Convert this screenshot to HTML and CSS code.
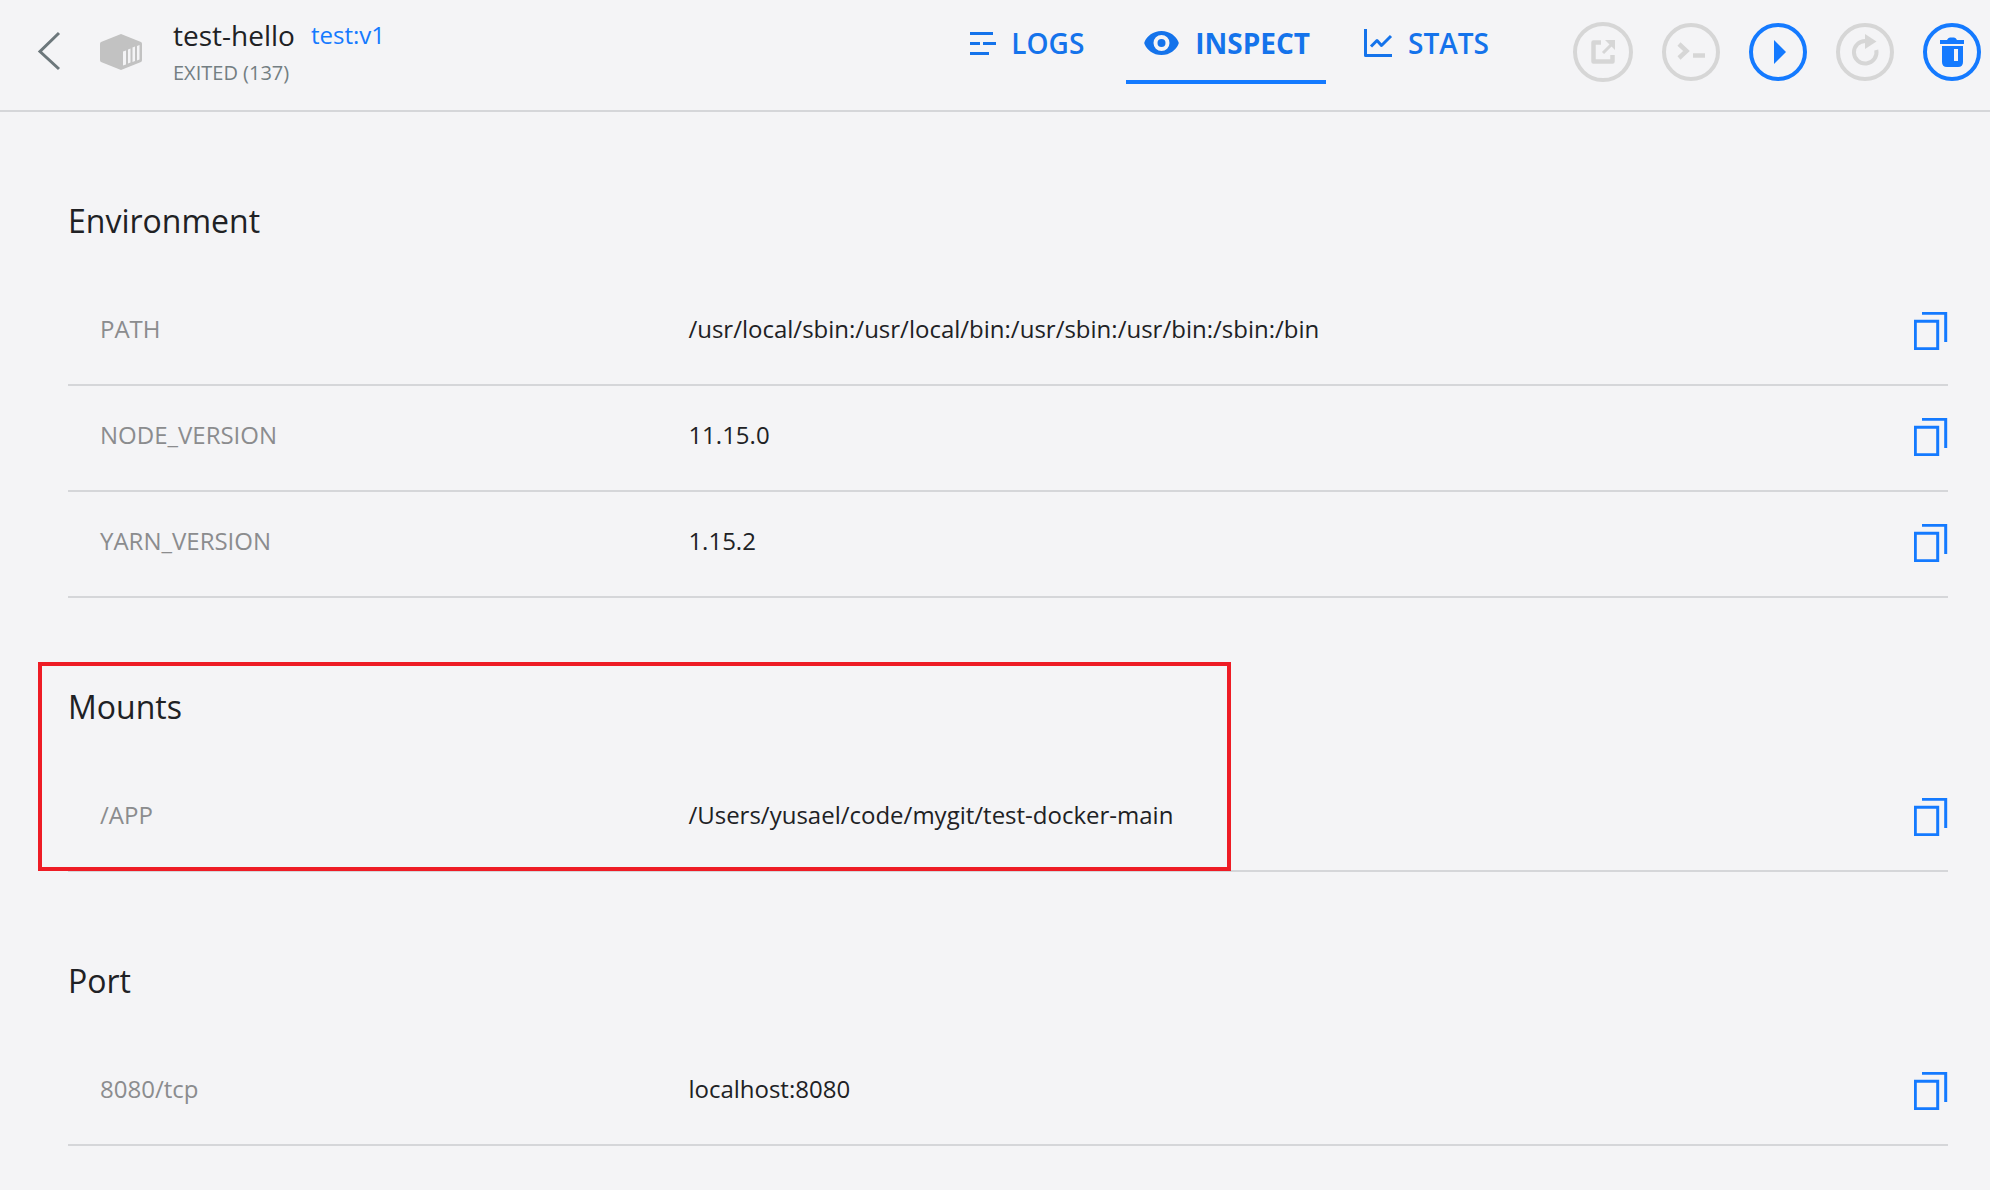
FILE: index.html
```
<!DOCTYPE html>
<html lang="en">

<head>
    <meta charset="UTF-8">
    <meta name="viewport" content="width=device-width,initial-scale=1.0">
    <title>test-hello</title>
    <link rel="stylesheet" href="styles.css">
</head>

<body>
    <!-- copy icon, shared by all rows -->
    <svg class="sprite" width="0" height="0">
        <symbol id="copy" viewBox="0 0 34 38">
            <path d="M8 1.3H31.7V30" />
            <path d="M1.3 9.3H23.7V36.7H1.3Z" />
        </symbol>
    </svg>

    <header class="header">
        <button class="back" type="button" aria-label="Back">
            <svg width="24" height="40" viewBox="0 0 24 40">
                <path d="M22 2L3 20.500L22 38" fill="none" stroke="#6c777b" stroke-width="3" />
            </svg>
        </button>
        <svg class="cube" width="42" height="36" viewBox="0 0 42 36">
            <path d="M21 0L41 8Q42 8.500 42 10V26Q42 27.500 41 28L21 36L1 28Q0 27.500 0 26V10Q0 8.500 1 8Z" fill="#c2c2c2" />
            <path d="M23 17.500L26 16.500V30.500L23 31.500ZM28 15.500L30.500 14.500V28.500L28 29.500ZM32.500 13.500L35 12.500V27L32.500 28ZM37 12L39.500 11V25.500L37 26.500Z" fill="#f4f4f6" />
        </svg>
        <div class="title">
            <div class="name">
                <h1>test-hello</h1>
                <a href="#">test:v1</a>
            </div>
            <div class="status">EXITED (137)</div>
        </div>

        <nav class="tabs">
            <a class="tab" href="#">
                <svg width="25" height="28" viewBox="0 0 25 28">
                    <path d="M0 4.500H23M0 14.500H10M13 14.500H26M0 24.500H19" fill="none" stroke="currentColor" stroke-width="3" />
                </svg>
                LOGS
            </a>
            <a class="tab active" href="#">
                <svg width="35" height="28" viewBox="0 0 35 28">
                    <path fill-rule="evenodd" d="M17.500 2C9 2 3 7 0.500 13Q0 14 0.500 15C3 21 9 26 17.500 26S32 21 34.500 15Q35 14 34.500 13C32 7 26 2 17.500 2ZM17.500 6A8 8 0 1 1 17.500 22A8 8 0 1 1 17.500 6Z" fill="currentColor" />
                    <circle cx="17.500" cy="14" r="4" fill="currentColor" />
                </svg>
                INSPECT
            </a>
            <a class="tab" href="#">
                <svg width="28" height="28" viewBox="0 0 28 28">
                    <path d="M1.500 0V26.500H28M7 17.500L13 11.500L17.500 16.500L27 7" fill="none" stroke="currentColor" stroke-width="3" stroke-linejoin="round" />
                </svg>
                STATS
            </a>
        </nav>

        <div class="actions">
            <button class="open" type="button" aria-label="Open in browser" disabled>
                <svg width="32" height="32" viewBox="0 0 32 32">
                    <path d="M14 6.500H6.500V25.500H25.500V19" fill="none" stroke="currentColor" stroke-width="4.500" stroke-linejoin="round" />
                    <path d="M16 17L25 8" stroke="currentColor" stroke-width="3" />
                    <path d="M18 4H28V14Z" fill="currentColor" />
                </svg>
            </button>
            <button type="button" aria-label="CLI" disabled>
                <svg width="32" height="32" viewBox="0 0 32 32">
                    <path d="M4 8L11.500 15L4 22M18 19.500H30" fill="none" stroke="currentColor" stroke-width="4.500" />
                </svg>
            </button>
            <button type="button" aria-label="Start">
                <svg width="32" height="32" viewBox="0 0 32 32">
                    <path d="M12 4L24 16L12 28Z" fill="currentColor" />
                </svg>
            </button>
            <button type="button" aria-label="Restart" disabled>
                <svg width="32" height="32" viewBox="0 0 32 32">
                    <path d="M17 5A11.300 11.300 0 1 0 27.300 14" fill="none" stroke="currentColor" stroke-width="4" />
                    <path d="M16 -2L27.500 5.500L16 13Z" fill="currentColor" />
                </svg>
            </button>
            <button type="button" aria-label="Delete">
                <svg width="32" height="32" viewBox="0 0 32 32">
                    <path d="M4 4H11Q12 1.500 14 1.500H18Q20 1.500 21 4H28V8H4Z" fill="currentColor" />
                    <path fill-rule="evenodd" d="M6 10H27V26Q27 31 22 31H11Q6 31 6 26ZM18 13V25H22V13Z" fill="currentColor" />
                </svg>
            </button>
        </div>
    </header>

    <main class="content">
        <section>
            <h2>Environment</h2>
            <table>
                <tr>
                    <th scope="row">PATH</th>
                    <td>/usr/local/sbin:/usr/local/bin:/usr/sbin:/usr/bin:/sbin:/bin</td>
                    <td class="action"><button class="copy" type="button" aria-label="Copy"><svg><use href="#copy" /></svg></button></td>
                </tr>
                <tr>
                    <th scope="row">NODE_VERSION</th>
                    <td>11.15.0</td>
                    <td class="action"><button class="copy" type="button" aria-label="Copy"><svg><use href="#copy" /></svg></button></td>
                </tr>
                <tr>
                    <th scope="row">YARN_VERSION</th>
                    <td>1.15.2</td>
                    <td class="action"><button class="copy" type="button" aria-label="Copy"><svg><use href="#copy" /></svg></button></td>
                </tr>
            </table>
        </section>

        <section class="marked">
            <h2>Mounts</h2>
            <table>
                <tr>
                    <th scope="row">/APP</th>
                    <td>/Users/yusael/code/mygit/test-docker-main</td>
                    <td class="action"><button class="copy" type="button" aria-label="Copy"><svg><use href="#copy" /></svg></button></td>
                </tr>
            </table>
        </section>

        <section>
            <h2>Port</h2>
            <table>
                <tr>
                    <th scope="row">8080/tcp</th>
                    <td>localhost:8080</td>
                    <td class="action"><button class="copy" type="button" aria-label="Copy"><svg><use href="#copy" /></svg></button></td>
                </tr>
            </table>
        </section>
    </main>
</body>

</html>
```
FILE: styles.css
```
* {
    margin: 0;
    padding: 0;
    box-sizing: border-box;
}

body {
    background-color: #f4f4f6;
    color: #202124;
    font-family: "Open Sans", "Noto Sans", sans-serif;
    font-size: 24px;
    line-height: 32px;
}

button {
    border: none;
    background: none;
    cursor: pointer;
}

svg {
    display: block;
    flex-shrink: 0;
    overflow: visible;
}

a {
    color: #147aff;
    text-decoration: none;
}

.sprite {
    position: absolute;
}

/* header */
.header {
    display: flex;
    align-items: flex-start;
    height: 112px;
    padding: 16px 9px 0 37px;
    border-bottom: 2px solid #d5d6d9;
}

.back {
    margin-top: 15px;
}

.cube {
    margin: 18px 31px 0 39px;
}

.name {
    display: flex;
    align-items: center;
    gap: 16px;
    height: 38px;
}

.name h1 {
    font-size: 28px;
    font-weight: 400;
}

.status {
    margin-top: 3px;
    color: #737e82;
    font-size: 20px;
}

.tabs {
    display: flex;
    gap: 20px;
    margin-left: auto;
}

.tab {
    display: flex;
    align-items: center;
    gap: 16px;
    height: 68px;
    padding: 0 16px 10px 18px;
    border-bottom: 4px solid transparent;
    color: #1473eb;
    font-size: 28px;
    font-weight: 600;
}

.tab:first-child {
    margin-right: 6px;
}

.tab.active {
    border-bottom-color: #147aff;
    font-weight: 700;
}

.actions {
    display: flex;
    align-items: center;
    gap: 29px;
    margin: 6px 0 0 68px;
}

.actions button {
    display: flex;
    align-items: center;
    justify-content: center;
    width: 58px;
    height: 58px;
    border: 4px solid #147aff;
    border-radius: 50%;
    color: #147aff;
}

.actions .open {
    width: 60px;
    height: 60px;
}

.actions button:disabled {
    border-color: #d6d6d6;
    color: #d6d6d6;
    cursor: default;
}

/* inspect sections */
.content {
    padding: 0 42px 44px 68px;
}

section {
    position: relative;
    padding-top: 88px;
}

h2 {
    height: 80px;
    font-size: 32px;
    font-weight: 400;
    line-height: 42px;
}

table {
    width: 100%;
    table-layout: fixed;
    border-spacing: 0;
}

th,
td {
    height: 106px;
    padding-bottom: 6px;
    border-bottom: 2px solid #d5d6d9;
    text-align: left;
    font-weight: 400;
}

th {
    width: 33%;
    padding-left: 32px;
    color: #8b8c8e;
}

.action {
    width: 64px;
    padding-bottom: 2px;
}

.copy {
    display: block;
    margin-left: auto;
}

.copy svg {
    width: 34px;
    height: 38px;
    fill: none;
    stroke: #147aff;
    stroke-width: 3px;
}

/* red frame round the mounts */
.marked::after {
    content: "";
    box-sizing: border-box;
    position: absolute;
    top: 64px;
    bottom: 1px;
    left: -30px;
    width: 1193px;
    border: 4px solid #ee1c25;
    pointer-events: none;
}
```
